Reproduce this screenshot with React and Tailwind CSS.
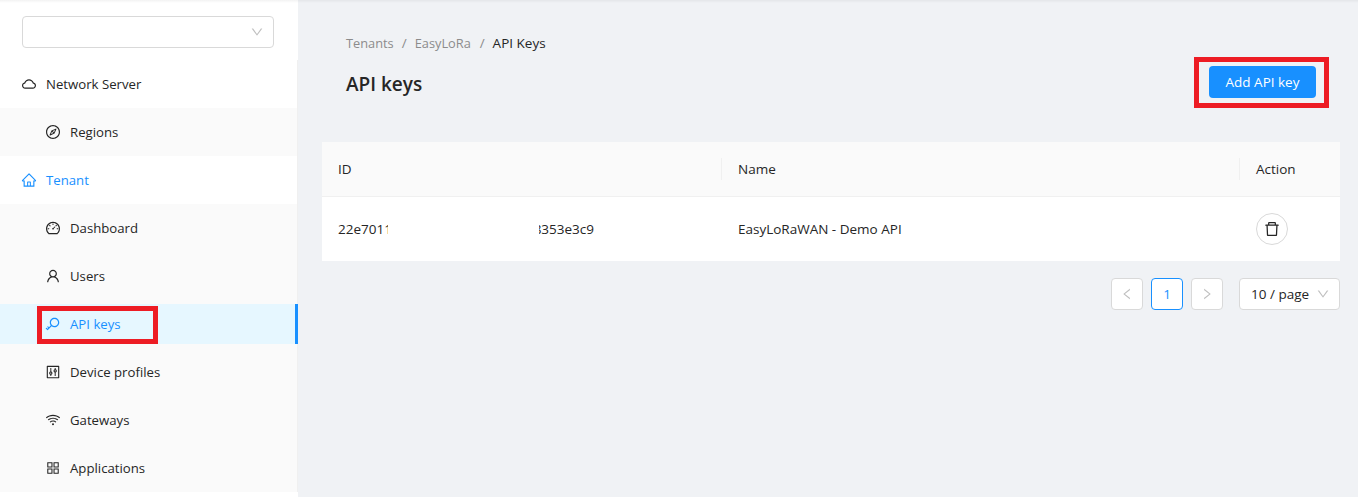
import React from "react";
import {
  AiOutlineAppstore,
  AiOutlineCloud,
  AiOutlineCompass,
  AiOutlineControl,
  AiOutlineDashboard,
  AiOutlineDelete,
  AiOutlineDown,
  AiOutlineHome,
  AiOutlineKey,
  AiOutlineLeft,
  AiOutlineRight,
  AiOutlineUser,
  AiOutlineWifi,
} from "react-icons/ai";

const tenantItems = [
  { label: "Dashboard", icon: AiOutlineDashboard },
  { label: "Users", icon: AiOutlineUser },
  { label: "API keys", icon: AiOutlineKey, active: true },
  { label: "Device profiles", icon: AiOutlineControl },
  { label: "Gateways", icon: AiOutlineWifi },
  { label: "Applications", icon: AiOutlineAppstore },
];

const MenuTitle = ({ icon: Icon, label, active }) => (
  <div className={`flex h-12 items-center gap-[9px] pl-[21px] ${active ? "text-[#1890ff]" : ""}`}>
    <Icon size={16} />
    <span>{label}</span>
  </div>
);

const SubItem = ({ icon: Icon, label, active }) => (
  <div className="py-1">
    <div
      className={`relative flex h-10 items-center gap-[9px] pl-[45px] ${
        active ? "w-[298px] border-r-[3px] border-[#1890ff] bg-[#e6f7ff] text-[#1890ff]" : ""
      }`}
    >
      <Icon size={16} />
      <span>{label}</span>
      {active && (
        <div className="absolute left-[37px] top-[2px] h-[38px] w-[121px] border-[5px] border-[#ed1c24]" />
      )}
    </div>
  </div>
);

const Sidebar = () => (
  <aside className="flex w-[298px] shrink-0 flex-col bg-white text-[13.2px]">
    <div className="h-[60px] pl-[22px] pt-4">
      <div className="flex h-8 w-[252px] items-center justify-end rounded-sm border border-[#d9d9d9] pr-[9px]">
        <AiOutlineDown size={14} className="text-[#bfbfbf]" />
      </div>
    </div>
    <div className="w-[298px] border-r border-[#f0f0f0]">
      <MenuTitle icon={AiOutlineCloud} label="Network Server" />
      <div className="bg-[#fafafa]">
        <SubItem icon={AiOutlineCompass} label="Regions" />
      </div>
      <MenuTitle icon={AiOutlineHome} label="Tenant" active />
      <div className="bg-[#fafafa]">
        {tenantItems.map((item) => (
          <SubItem key={item.label} {...item} />
        ))}
      </div>
    </div>
  </aside>
);

const PageButton = ({ children, active }) => (
  <div
    className={`flex size-8 items-center justify-center rounded-sm border bg-white ${
      active ? "border-[#1890ff] font-medium text-[#1890ff]" : "border-[#d9d9d9] text-[#bfbfbf]"
    }`}
  >
    {children}
  </div>
);

const App = () => {
  return (
    <div
      className="relative flex h-[497px] w-[1366px] overflow-hidden bg-white text-[13.5px] leading-[22px] text-[#262626]"
      style={{ fontFamily: '"Open Sans", "Noto Sans", sans-serif' }}
    >
      <div className="absolute left-0 top-0 h-[3px] w-[1358px] bg-linear-to-b from-black/5 to-transparent" />
      <Sidebar />
      <main className="h-full w-[1060px] bg-[#f0f2f5] pl-6 pr-[18px]">
        <div className="pl-6 pr-[11px] pt-8">
          <div className="flex h-[22px] items-center gap-2 text-[#8c8c8c]">
            <span className="text-[12.8px]">Tenants</span>
            <span>/</span>
            <span className="w-[57px] text-[12.8px]">EasyLoRa</span>
            <span>/</span>
            <span className="text-[#262626]">API Keys</span>
          </div>
          <div className="mt-[3px] flex items-center justify-between">
            <h1 className="pt-[2px] text-[19px] font-semibold leading-7">API keys</h1>
            <div className="border-[5px] border-[#ed1c24] pb-[5px] pl-[10px] pr-2 pt-1">
              <button className="flex h-8 w-[107px] items-center justify-center rounded-sm bg-[#1890ff] text-white">
                Add API key
              </button>
            </div>
          </div>
        </div>

        <div className="mt-[34px] bg-white">
          <div className="grid h-[55px] grid-cols-[400px_518px_100px] items-center border-b border-[#f0f0f0] bg-[#fafafa] font-medium">
            <div className="border-r border-[#f0f0f0] pl-4">ID</div>
            <div className="border-r border-[#f0f0f0] pl-4">Name</div>
            <div className="pl-4">Action</div>
          </div>
          <div className="grid h-16 grid-cols-[400px_518px_100px] items-center">
            <div className="flex pl-4">
              <span className="w-[50px] overflow-hidden whitespace-nowrap">22e70111</span>
              <span className="ml-[151px] flex w-[55px] justify-end overflow-hidden whitespace-nowrap">
                8353e3c9
              </span>
            </div>
            <div className="pl-4">EasyLoRaWAN - Demo API</div>
            <div className="pl-4">
              <button className="flex size-8 items-center justify-center rounded-full border border-[#d9d9d9] bg-white">
                <AiOutlineDelete size={18} />
              </button>
            </div>
          </div>
        </div>

        <div className="mt-[17px] flex justify-end">
          <div className="flex gap-2">
            <PageButton>
              <AiOutlineLeft size={14} />
            </PageButton>
            <PageButton active>1</PageButton>
            <PageButton>
              <AiOutlineRight size={14} />
            </PageButton>
          </div>
          <div className="ml-4 flex h-8 w-[101px] items-center justify-between rounded-sm border border-[#d9d9d9] bg-white pl-[11px] pr-[9px]">
            <span>10 / page</span>
            <AiOutlineDown size={14} className="text-[#bfbfbf]" />
          </div>
        </div>
      </main>
    </div>
  );
};

export default App;
